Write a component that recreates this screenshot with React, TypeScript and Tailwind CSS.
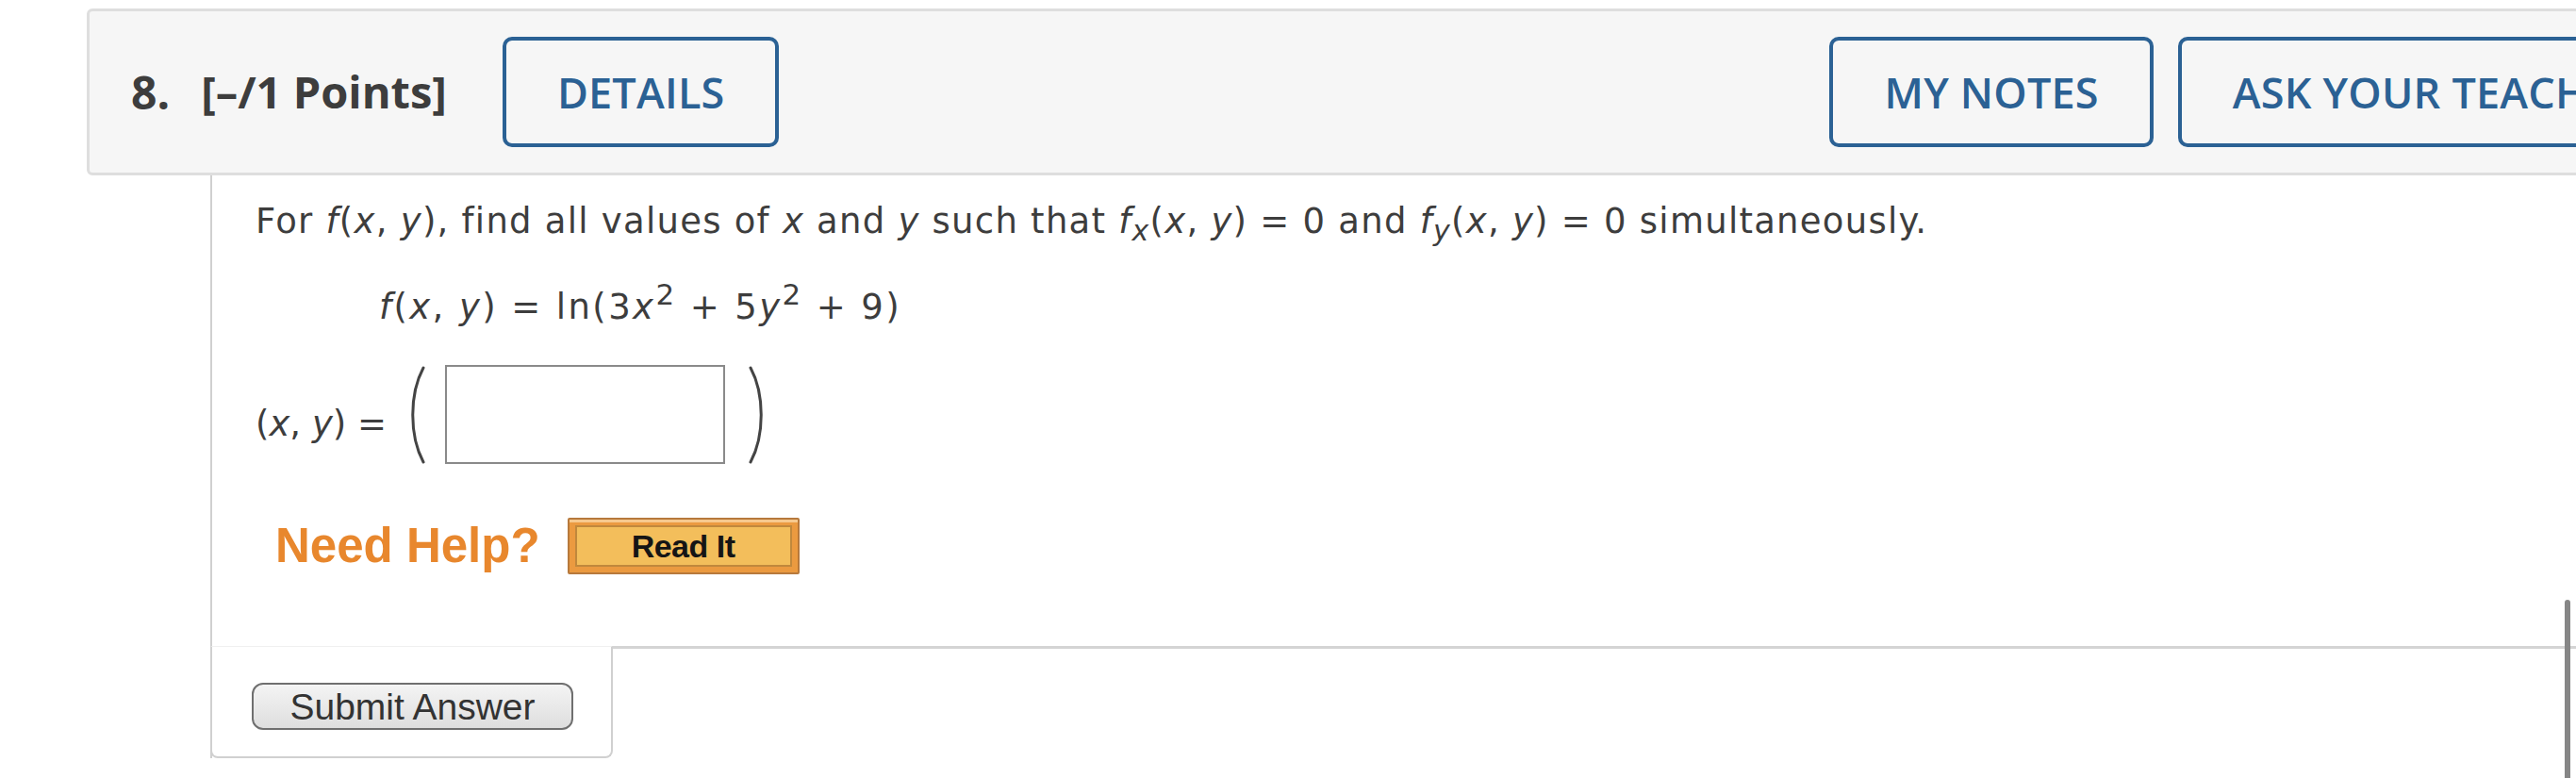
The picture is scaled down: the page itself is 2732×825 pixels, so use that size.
const openSans = "font-['Open_Sans',sans-serif]"
const verdana = "font-['DejaVu_Sans','Verdana',sans-serif]"
const arial = "font-['Liberation_Sans','Arial',sans-serif]"

function HeaderButton({ label, className = '' }: { label: string; className?: string }) {
  return (
    <button
      type="button"
      className={`h-[117px] shrink-0 rounded-[10px] border-[4px] border-[#2b6194] px-[54px] text-[45px] font-semibold tracking-[0.2px] text-[#2b6194] ${openSans} ${className}`}
    >
      {label}
    </button>
  )
}

function Paren({ flip = false, className = '' }: { flip?: boolean; className?: string }) {
  return (
    <svg width="24" height="104" viewBox="0 0 24 104" className={`shrink-0 ${className}`}>
      <path
        d={flip ? 'M5 2 C20 30 20 74 5 102' : 'M19 2 C4 30 4 74 19 102'}
        fill="none"
        stroke="#444"
        strokeWidth="3"
        strokeLinecap="round"
      />
    </svg>
  )
}

export default function App() {
  return (
    <div className="relative h-[825px] w-[2732px] overflow-hidden bg-white pt-[9px]">
      {/* question header */}
      <div className="ml-[92px] flex h-[177px] w-[2900px] items-center rounded-[6px] border-[3px] border-[#dedede] bg-[#f6f6f6] pl-[44px]">
        <span className={`text-[48px] font-bold text-[#3d3d3d] ${openSans}`}>8.</span>
        <span className={`ml-[33px] text-[47px] font-bold text-[#3d3d3d] ${openSans}`}>
          [–/1 Points]
        </span>
        <HeaderButton label="DETAILS" className="ml-[59px]" />
        <HeaderButton label="MY NOTES" className="ml-[1114px]" />
        <HeaderButton label="ASK YOUR TEACHER" className="ml-[26px]" />
      </div>

      {/* question body */}
      <div className="ml-[223px] border-l-[2px] border-[#d0d0d0]">
        <div className={`pl-[46px] pt-[27px] text-[37px] leading-[44px] text-[#3d3d3d] ${verdana}`}>
          <p className="tracking-[1.25px]">
            For <i>f</i>(<i>x</i>, <i>y</i>), find all values of <i>x</i> and <i>y</i> such that{' '}
            <i>f</i>
            <sub className="text-[30px] italic">x</sub>(<i>x</i>, <i>y</i>) = 0 and <i>f</i>
            <sub className="text-[30px] italic">y</sub>(<i>x</i>, <i>y</i>) = 0 simultaneously.
          </p>
          <p className="mt-[47px] pl-[131px] tracking-[2.4px]">
            <i>f</i>(<i>x</i>, <i>y</i>) = ln(3<i>x</i>
            <sup className="text-[31px]">2</sup> + 5<i>y</i>
            <sup className="text-[31px]">2</sup> + 9)
          </p>
          <div className="mt-[39px] flex items-center">
            <span className="mt-[20px]">
              (<i>x</i>, <i>y</i>) =
            </span>
            <div className="ml-[20px] flex items-center">
              <Paren />
              <input
                type="text"
                className="ml-[18px] h-[105px] w-[297px] border-[2px] border-[#8a8a8a] bg-white outline-none"
              />
              <Paren flip className="ml-[22px]" />
            </div>
          </div>
          <div className="mt-[57px] flex items-center pl-[21px]">
            <span className={`text-[51px] font-bold text-[#e8872d] ${arial}`}>Need Help?</span>
            <button
              type="button"
              className="ml-[29px] h-[60px] w-[246px] rounded-[2px] border-[2px] border-[#b7793c] bg-[#eb9a40] p-[6px] shadow-[inset_0_3px_0_#f6c98e]"
            >
              <span
                className={`flex h-full w-full items-center justify-center border-[2px] border-[#c0883c] bg-[#f3be5b] text-[34px] font-bold tracking-[-0.5px] text-[#151515] ${arial}`}
              >
                Read It
              </span>
            </button>
          </div>
        </div>

        <div className="mt-[76px] flex">
          <div className="-ml-[2px] w-[427px] rounded-b-[8px] border-x-[2px] border-b-[2px] border-t-[1px] border-x-[#d0d0d0] border-b-[#d0d0d0] border-t-[#f0f0f0] pb-[28px] pt-[38px]">
            <button
              type="button"
              className={`ml-[42px] h-[50px] w-[341px] rounded-[12px] border-[2px] border-[#6f6f6f] bg-gradient-to-b from-[#f4f4f4] to-[#dedede] text-[39px] leading-none text-[#333] ${arial}`}
            >
              Submit Answer
            </button>
          </div>
          <div className="flex-1 border-t-[3px] border-[#d4d4d4]" />
        </div>
      </div>

      {/* scrollbar thumb */}
      <div className="absolute right-[6px] top-[636px] h-[200px] w-[6px] rounded-t-full bg-[#868686]" />
    </div>
  )
}
